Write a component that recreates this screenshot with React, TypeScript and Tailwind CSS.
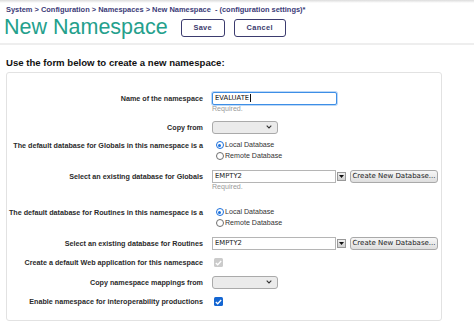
import React from "react";

const F = "font-['Liberation_Sans',Arial,sans-serif]";

function Label({ children, h }: { children: React.ReactNode; h: string }) {
  return (
    <div className={`w-[196px] shrink-0 text-right font-bold text-[7.2px] text-[#2b2b2b] whitespace-nowrap ${h}`}>
      {children}
    </div>
  );
}

function Radio({ on, label }: { on?: boolean; label: string }) {
  return (
    <div className="flex items-center h-[11px]">
      <div className="ml-[3px] w-[9px] h-[9px] flex items-center justify-center">
        {on ? (
          <div className="w-[8px] h-[8px] rounded-full border-[1.5px] border-[#1a6fdc] bg-white flex items-center justify-center">
            <div className="w-[3.5px] h-[3.5px] rounded-full bg-[#1a6fdc]" />
          </div>
        ) : (
          <div className="w-[8px] h-[8px] rounded-full border border-[#6f6f6f] bg-white" />
        )}
      </div>
      <span className="ml-[1px] text-[7.1px] text-[#333] leading-[11px]">{label}</span>
    </div>
  );
}

function Select() {
  return (
    <div className="w-[66px] h-[13px] rounded-[3px] border border-[#aaa] bg-[#ebebeb] flex items-center justify-end pr-[5px]">
      <svg width="6" height="4" viewBox="0 0 6 4">
        <path d="M0.7 0.7 L3 3 L5.3 0.7" fill="none" stroke="#333" strokeWidth="1.1" />
      </svg>
    </div>
  );
}

function Combo() {
  return (
    <div className="flex items-center">
      <div className="w-[124px] h-[13px] border border-[#b5b5b5] bg-white text-[6.8px] text-[#222] leading-[11px] pl-[2px] font-['DejaVu_Sans',sans-serif]">
        EMPTY2
      </div>
      <div className="ml-[1px] w-[9px] h-[9px] border border-[#999] bg-gradient-to-b from-[#f0f0f0] to-[#cfcfcf] flex items-center justify-center">
        <svg width="5" height="3" viewBox="0 0 5 3">
          <path d="M0 0 L5 0 L2.5 3 Z" fill="#111" />
        </svg>
      </div>
      <div className="ml-[4px] w-[88px] h-[13px] rounded-[3px] border border-[#a9a9a9] bg-gradient-to-b from-[#f7f7f7] to-[#dedede] flex items-center justify-center text-[7px] text-[#1a1a1a] font-['DejaVu_Sans',sans-serif] leading-none whitespace-nowrap">
        Create New Database...
      </div>
    </div>
  );
}

function Check({ disabled }: { disabled?: boolean }) {
  return (
    <div
      className={`ml-[2px] w-[9px] h-[9px] rounded-[1.5px] flex items-center justify-center ${
        disabled ? "bg-[#cbcbcb]" : "bg-[#1466d2]"
      }`}
    >
      <svg width="7" height="6" viewBox="0 0 7 6">
        <path d="M0.8 3 L2.7 4.8 L6.2 1" fill="none" stroke="white" strokeWidth="1.3" />
      </svg>
    </div>
  );
}

export default function App() {
  return (
    <div className={`w-[474px] h-[336px] bg-white overflow-hidden ${F}`}>
      <div className="h-[45px] bg-white border-b-[2px] border-[#eeeeee] relative">
        <div className="absolute top-0 left-0 right-0 h-[3px] bg-gradient-to-b from-[#dcdcdc] to-white" />
        <div className="pt-[4.5px] pl-[6px] text-[7.45px] leading-[9px] font-bold text-[#3b3b78] whitespace-pre">
          {"System > Configuration > Namespaces > New Namespace  - (configuration settings)*"}
        </div>
        <div className="mt-[3.5px] pl-[4px] flex items-center h-[22px]">
          <div className="text-[21.5px] leading-[21.5px] text-[#24a08c]">New Namespace</div>
          <div className="ml-[13px] w-[44px] h-[18px] rounded-[3px] border-[1.5px] border-[#3b3b6e] flex items-center justify-center text-[7.4px] font-bold text-[#3b3b6e] tracking-[0.3px]">
            Save
          </div>
          <div className="ml-[9px] w-[52px] h-[18px] rounded-[3px] border-[1.5px] border-[#3b3b6e] flex items-center justify-center text-[7.4px] font-bold text-[#3b3b6e] tracking-[0.4px]">
            Cancel
          </div>
        </div>
      </div>

      <div className="mt-[11.7px] pl-[6px] text-[9.6px] leading-[12px] font-bold text-[#111]">
        Use the form below to create a new namespace:
      </div>

      <div className="mt-[3.3px] ml-[6px] w-[436px] h-[249px] border border-[#e2e2e2] rounded-[3px] bg-white">
        <div className="mt-[19px] flex">
          <Label h="leading-[13px]">Name of the namespace</Label>
          <div className="ml-[9px]">
            <div className="w-[125px] h-[13px] border border-[#3d8ee6] rounded-[2px] shadow-[0_0_0_1px_#bcd8f7] bg-white text-[6.8px] leading-[11px] pl-[2px] text-[#111] font-['DejaVu_Sans',sans-serif] flex items-center">
              EVALUATE<span className="inline-block w-[0.6px] h-[8px] bg-[#111] ml-[0.5px]" />
            </div>
            <div className="text-[7.1px] leading-[8px] text-[#9a9a9a]">Required.</div>
          </div>
        </div>
        <div className="mt-[8px] flex">
          <Label h="leading-[13px]">Copy from</Label>
          <div className="ml-[9px]">
            <Select />
          </div>
        </div>
        <div className="mt-[6px] flex">
          <Label h="leading-[11px]">The default database for Globals in this namespace is a</Label>
          <div className="ml-[9px]">
            <Radio on label="Local Database" />
            <Radio label="Remote Database" />
          </div>
        </div>
        <div className="mt-[8px] flex">
          <Label h="leading-[13px]">Select an existing database for Globals</Label>
          <div className="ml-[9px]">
            <Combo />
            <div className="text-[7.1px] leading-[8px] text-[#9a9a9a]">Required.</div>
          </div>
        </div>
        <div className="mt-[16px] flex">
          <Label h="leading-[11px]">The default database for Routines in this namespace is a</Label>
          <div className="ml-[9px]">
            <Radio on label="Local Database" />
            <Radio label="Remote Database" />
          </div>
        </div>
        <div className="mt-[8px] flex">
          <Label h="leading-[13px]">Select an existing database for Routines</Label>
          <div className="ml-[9px]">
            <Combo />
          </div>
        </div>
        <div className="mt-[7px] flex items-center h-[12px]">
          <Label h="leading-[12px]">Create a default Web application for this namespace</Label>
          <div className="ml-[9px]">
            <Check disabled />
          </div>
        </div>
        <div className="mt-[7px] flex">
          <Label h="leading-[13px]">Copy namespace mappings from</Label>
          <div className="ml-[9px]">
            <Select />
          </div>
        </div>
        <div className="mt-[7px] flex items-center h-[12px]">
          <Label h="leading-[12px]">Enable namespace for interoperability productions</Label>
          <div className="ml-[9px]">
            <Check />
          </div>
        </div>
      </div>
    </div>
  );
}
